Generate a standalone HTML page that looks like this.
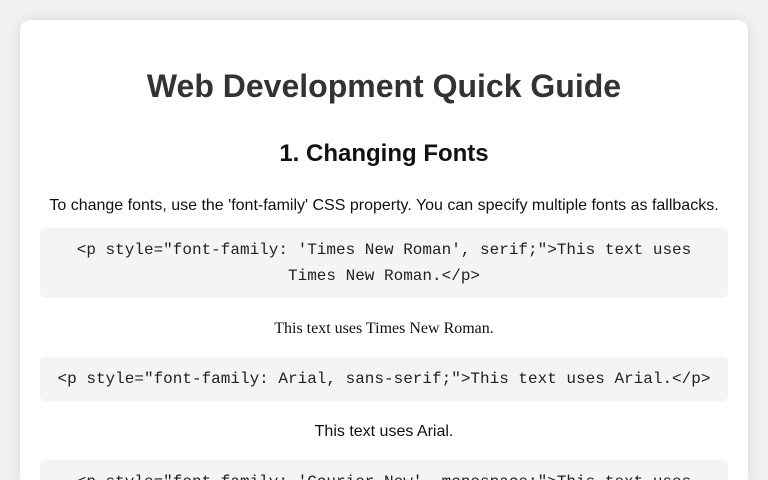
<!DOCTYPE html>
<html><head><meta charset="utf-8"><style>
html,body{margin:0;padding:0;background:#f0f0f0;width:768px;height:480px;overflow:hidden}
.card{position:absolute;left:20px;top:20px;width:728px;height:460px;background:#fff;border-radius:10px 10px 0 0;box-shadow:0 0 10px rgba(0,0,0,0.1);overflow:hidden}
.t{position:absolute;left:0;width:728px;text-align:center;margin:0}
h1{font:bold 32px/37px "Liberation Sans",sans-serif;color:#333}
h2{font:bold 24px/28px "Liberation Sans",sans-serif;color:#111}
p{font:16px/18px "Liberation Sans",sans-serif;color:#111}
.code{position:absolute;left:20px;width:688px;background:#f4f4f4;border-radius:5px;font:16px/26px "Liberation Mono",monospace;color:#222;text-align:center;padding:9px 0;box-sizing:border-box;overflow:hidden}
</style></head><body>
<div class="card">
<h1 class="t" style="top:48px">Web Development Quick Guide</h1>
<h2 class="t" style="top:120px">1. Changing Fonts</h2>
<p class="t" style="top:177px">To change fonts, use the 'font-family' CSS property. You can specify multiple fonts as fallbacks.</p>
<div class="code" style="top:208px;height:70px">&lt;p style="font-family: 'Times New Roman', serif;"&gt;This text uses<br>Times New Roman.&lt;/p&gt;</div>
<p class="t" style="top:300px;font-family:'Liberation Serif',serif">This text uses Times New Roman.</p>
<div class="code" style="top:337px;height:44px">&lt;p style="font-family: Arial, sans-serif;"&gt;This text uses Arial.&lt;/p&gt;</div>
<p class="t" style="top:403px">This text uses Arial.</p>
<div class="code" style="top:440px;height:20px;border-radius:5px 5px 0 0">&lt;p style="font-family: 'Courier New', monospace;"&gt;This text uses<br>Courier New.&lt;/p&gt;</div>
</div>
</body></html>
